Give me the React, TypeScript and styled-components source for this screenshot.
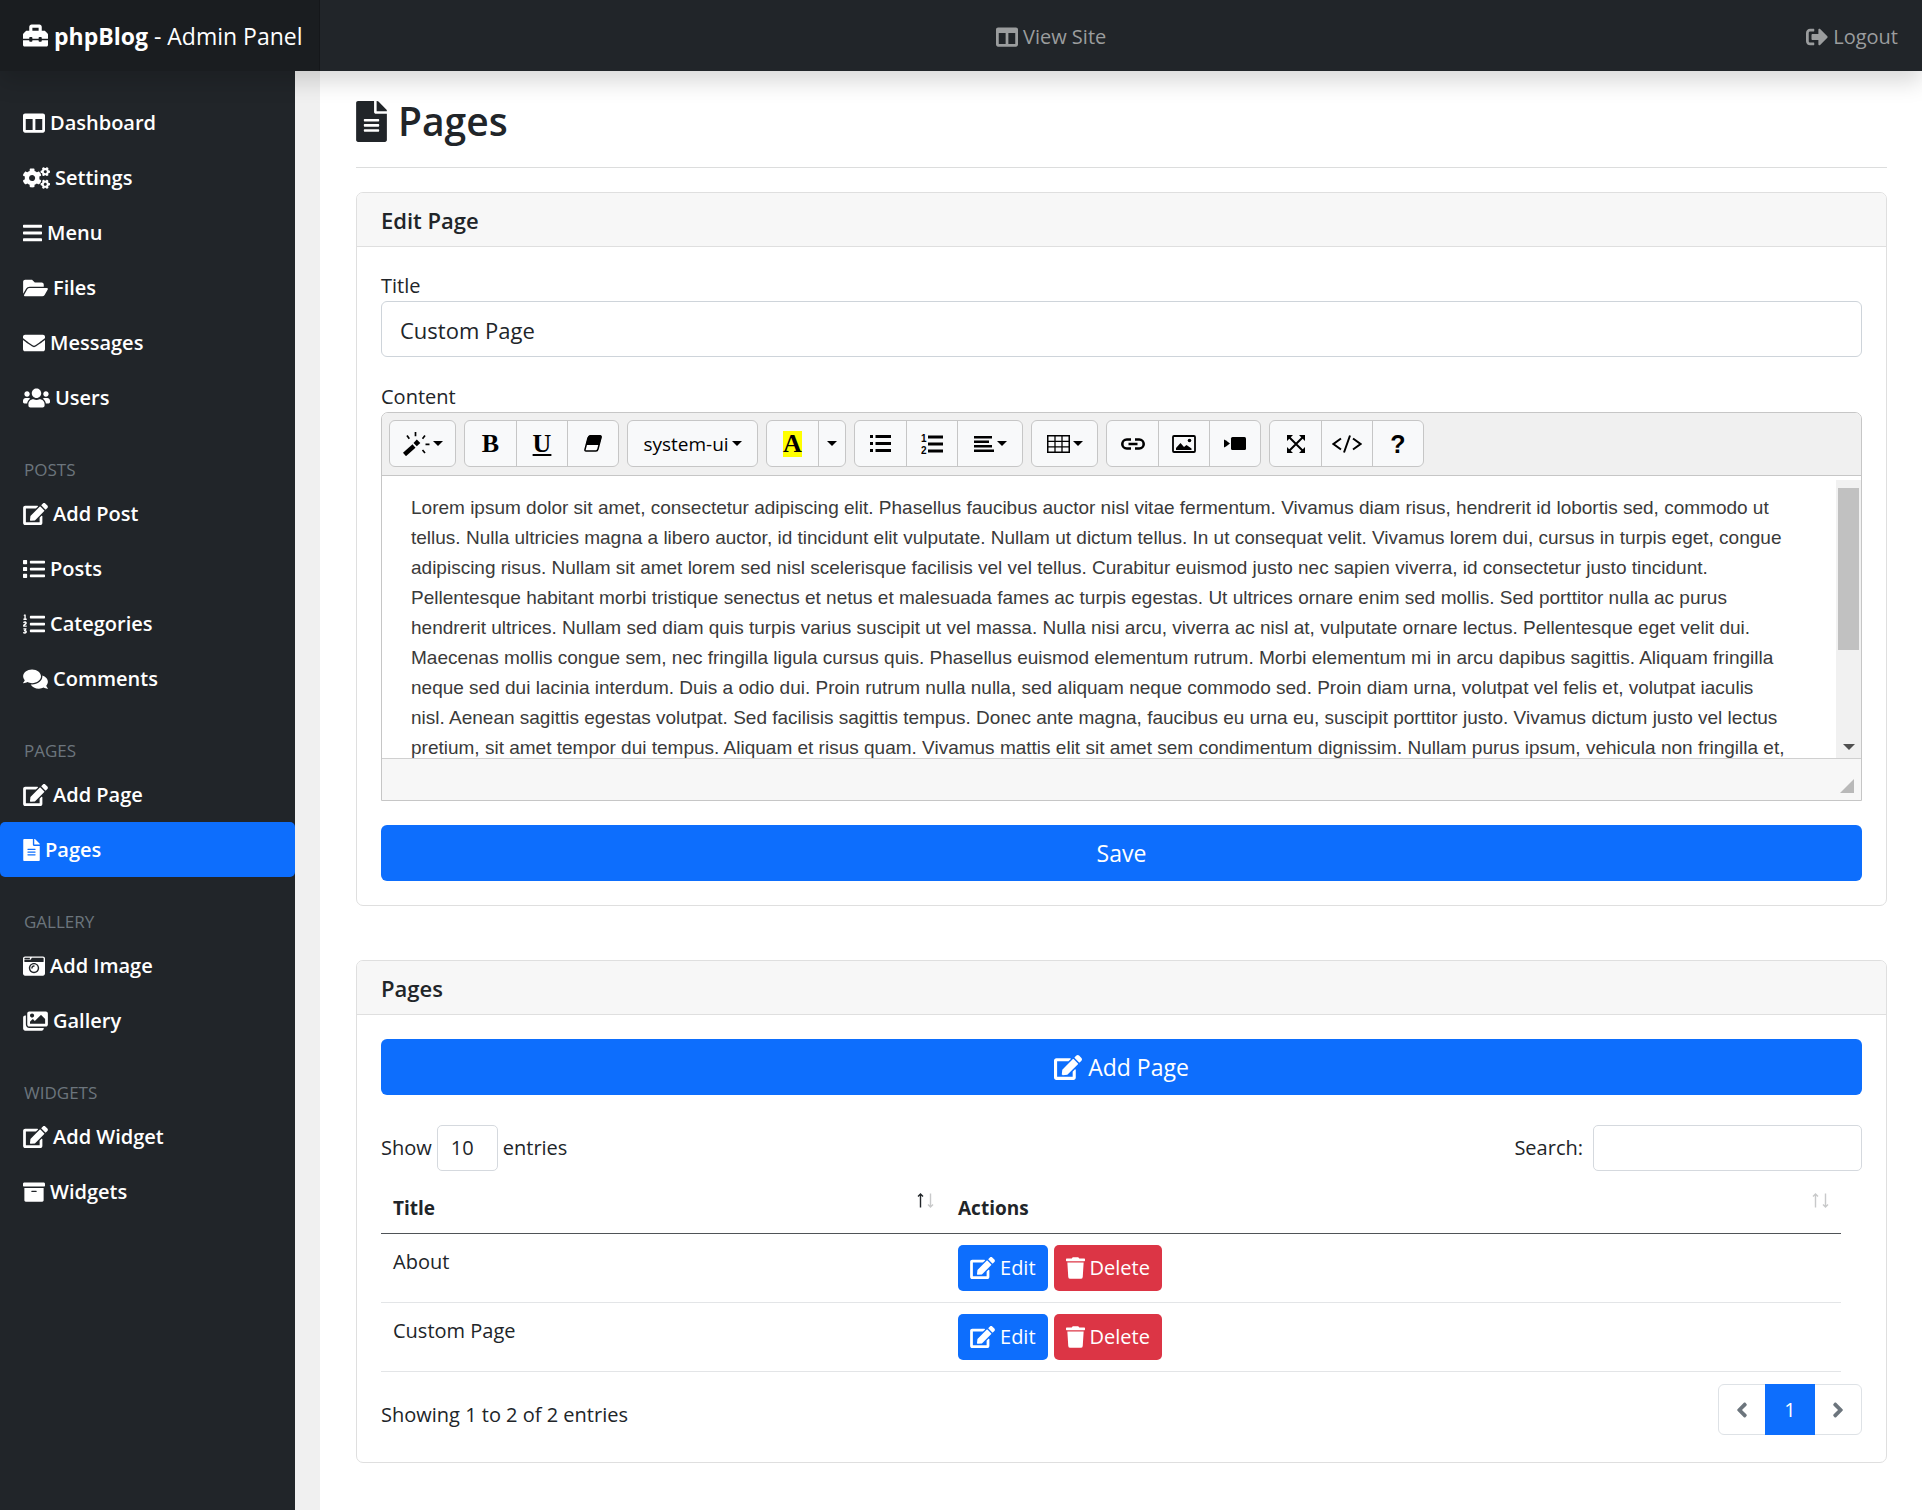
import React from "react";
import styled, { createGlobalStyle } from "styled-components";
import type { IconType } from "react-icons";
import {
  FaToolbox, FaColumns, FaCogs, FaBars, FaFolderOpen, FaEnvelope, FaUsers, FaEdit, FaList,
  FaListOl, FaComments, FaFileAlt, FaCameraRetro, FaImages, FaArchive, FaSignOutAlt, FaTrash,
  FaAngleLeft, FaAngleRight,
} from "react-icons/fa";

const sans = `"Open Sans", "Noto Sans", sans-serif`;
const blue = "#0d6efd";
const red = "#dc3545";
const ink = "#212529";
const cardLine = "#dfdfdf";
const toolLine = "#c6c6c6";

const GlobalStyle = createGlobalStyle`
  *, *::before, *::after { box-sizing: border-box; }
  body { margin: 0; background: #fff; color: ${ink}; font: 400 20px/30px ${sans}; }
  button, input, select, textarea { font: inherit; color: inherit; margin: 0; }
  a { text-decoration: none; color: inherit; }
`;

const Page = styled.div`
  min-height: 100vh;
  display: flex;
  flex-direction: column;
`;

const Glyph = styled.span<{ $w: number; $h?: number }>`
  display: flex;
  flex: none;
  svg {
    width: ${(p) => p.$w}px;
    height: ${(p) => p.$h ?? 22}px;
  }
`;

const Navbar = styled.header`
  position: relative;
  z-index: 2;
  display: flex;
  align-items: center;
  justify-content: space-between;
  height: 71px;
  background: ${ink};
  box-shadow: 0 11px 21px rgba(0, 0, 0, 0.15);
`;

const Brand = styled.a`
  display: flex;
  align-items: center;
  gap: 6px;
  width: 320px;
  height: 100%;
  padding: 0 0 0 23px;
  background: #1a1d20;
  border-right: 1px solid #15171a;
  color: #fff;
  font-size: 23px;
  white-space: nowrap;
  strong { font-weight: 700; }
`;

const NavLink = styled.a`
  display: flex;
  align-items: center;
  gap: 5px;
  padding: 2px 24px 0;
  color: #9b9d9e;
`;

const Columns = styled.div`
  flex: 1;
  display: flex;
`;

const Sidebar = styled.nav`
  flex: 0 0 320px;
  padding: 24px 0;
  background: ${ink};
  border-right: 25px solid #f0f0f0;
`;

const SideHeading = styled.h2`
  margin: 0;
  padding: 34px 24px 5px;
  color: #6c757d;
  font-size: 17px;
  line-height: 22px;
  font-weight: 400;
  text-transform: uppercase;
`;

const SideLink = styled.a<{ $active?: boolean }>`
  display: flex;
  align-items: center;
  gap: 5px;
  height: 55px;
  padding: 0 23px;
  border-radius: 5px;
  background: ${(p) => (p.$active ? blue : "transparent")};
  color: #fff;
  font-weight: 600;
`;

const Main = styled.main`
  flex: 1;
  min-width: 0;
  padding: 23px 35px 48px 36px;
`;

const Title = styled.h1`
  display: flex;
  align-items: center;
  gap: 11px;
  margin: 0 0 19px;
  font-size: 39px;
  line-height: 54px;
  font-weight: 600;
`;

const Rule = styled.hr`
  margin: 0 0 24px;
  border: 0;
  border-top: 1px solid #dcdddd;
`;

const Card = styled.section`
  border: 1px solid ${cardLine};
  border-radius: 7px;
  background: #fff;
  & + & { margin-top: 54px; }
`;

const CardHeader = styled.h2`
  margin: 0;
  padding: 12px 24px 11px;
  border-bottom: 1px solid ${cardLine};
  border-radius: 6px 6px 0 0;
  background: #f7f7f7;
  font-size: 22px;
  line-height: 30px;
  font-weight: 600;
`;

const CardBody = styled.div`
  padding: 24px;
`;

const FieldLabel = styled.label`
  display: block;
`;

const TextInput = styled.input`
  display: block;
  width: 100%;
  height: 56px;
  margin-bottom: 25px;
  padding: 2px 18px 0;
  border: 1px solid #ced4da;
  border-radius: 6px;
  background: #fff;
  font-size: 22px;
`;

const Editor = styled.div`
  margin-bottom: 24px;
  border: 1px solid ${toolLine};
  border-radius: 7px 7px 0 0;
  overflow: hidden;
`;

const Toolbar = styled.div`
  display: flex;
  flex-wrap: wrap;
  align-items: center;
  gap: 8px;
  padding: 7px 7px 8px;
  background: #f0f0f0;
  border-bottom: 1px solid ${toolLine};
`;

const ToolGroup = styled.div`
  display: flex;
  border: 1px solid ${toolLine};
  border-radius: 6px;
  overflow: hidden;
  background: #f8f9fa;
`;

const ToolButton = styled.button<{ $w?: number }>`
  display: flex;
  align-items: center;
  justify-content: center;
  gap: 3px;
  width: ${(p) => p.$w ?? 51}px;
  height: 45px;
  padding: 0;
  border: 0;
  background: transparent;
  color: #000;
  font-size: 19px;
  & + & { border-left: 1px solid ${toolLine}; }
`;

const Letter = styled.span<{ $underline?: boolean }>`
  font: 700 26px/26px "Liberation Serif", serif;
  text-decoration: ${(p) => (p.$underline ? "underline" : "none")};
`;

const Highlight = styled(Letter)`
  background: #ff0;
`;

const HelpMark = styled.span`
  font: 700 25px/26px "Liberation Sans", sans-serif;
`;

const Caret = styled.span`
  border: 5px solid transparent;
  border-top-color: #000;
  border-bottom: 0;
`;

const EditArea = styled.div`
  display: flex;
  height: 282px;
`;

const Content = styled.textarea`
  flex: 1;
  min-width: 0;
  height: 100%;
  padding: 17px 8px 0 29px;
  border: 0;
  outline: 0;
  resize: none;
  overflow: hidden;
  white-space: pre;
  background: #fff;
  color: #3a3a3a;
  font: 400 19px/30px "Liberation Sans", Arial, sans-serif;
`;

const ScrollTrack = styled.div`
  display: flex;
  flex-direction: column;
  justify-content: space-between;
  align-items: center;
  width: 25px;
  margin-top: 4px;
  padding: 8px 0;
  background: #f1f1f1;
`;

const ScrollThumb = styled.div`
  width: 21px;
  height: 162px;
  background: #c1c1c1;
`;

const ScrollArrow = styled.span`
  border: 6px solid transparent;
  border-top-color: #505050;
  border-bottom: 0;
`;

const StatusBar = styled.div`
  display: flex;
  justify-content: flex-end;
  align-items: flex-end;
  height: 42px;
  padding: 7px;
  background: #f7f7f7;
  border-top: 1px solid #d0d0d0;
`;

const BlockButton = styled.button`
  display: flex;
  align-items: center;
  justify-content: center;
  gap: 6px;
  width: 100%;
  height: 56px;
  border: 0;
  border-radius: 6px;
  background: ${blue};
  color: #fff;
  font-size: 23px;
`;

const TableTools = styled.div`
  display: flex;
  justify-content: space-between;
  margin: 30px 0 10px;
`;

const InlineLabel = styled.label<{ $gap: number }>`
  display: flex;
  align-items: center;
  gap: ${(p) => p.$gap}px;
`;

const LengthSelect = styled.select`
  appearance: none;
  width: 61px;
  height: 46px;
  padding: 0 13px;
  border: 1px solid #d5d9de;
  border-radius: 5px;
  background: #fff;
`;

const SearchInput = styled.input`
  width: 269px;
  height: 46px;
  padding: 0 11px;
  border: 1px solid #d5d9de;
  border-radius: 5px;
  background: #fff;
`;

const Table = styled.table`
  width: calc(100% - 21px);
  border-collapse: separate;
  border-spacing: 0;
  table-layout: fixed;
`;

const HeadCell = styled.th<{ $w?: string }>`
  width: ${(p) => p.$w ?? "auto"};
  padding: 12px 12px 10px;
  border-bottom: 1px solid #4f5357;
  text-align: left;
  font-size: 19px;
  font-weight: 700;
`;

const HeadInner = styled.div`
  display: flex;
  justify-content: space-between;
  align-items: flex-start;
`;

const Cell = styled.td`
  padding: 11px 12px;
  border-bottom: 1px solid #e3e5e7;
  vertical-align: top;
  line-height: 34px;
`;

const Actions = styled.div`
  display: flex;
  gap: 6px;
`;

const SmallButton = styled.button<{ $color: string }>`
  display: flex;
  align-items: center;
  gap: 5px;
  height: 46px;
  padding: 0 12px;
  border: 0;
  border-radius: 5px;
  background: ${(p) => p.$color};
  color: #fff;
`;

const TableFooter = styled.div`
  display: flex;
  justify-content: space-between;
  align-items: flex-start;
  min-height: 54px;
  margin-top: 12px;
`;

const Info = styled.p`
  margin: 16px 0 0;
`;

const Pagination = styled.div`
  display: flex;
  height: 51px;
  border: 1px solid #dee2e6;
  border-radius: 6px;
`;

const PageButton = styled.button<{ $active?: boolean }>`
  display: flex;
  align-items: center;
  justify-content: center;
  width: ${(p) => (p.$active ? 50 : 46)}px;
  margin: ${(p) => (p.$active ? "-1px 0" : "0")};
  padding: 0;
  border: 0;
  background: ${(p) => (p.$active ? blue : "transparent")};
  color: ${(p) => (p.$active ? "#fff" : "#6c757d")};
`;

const WandIcon = () => (
  <svg width="27" height="24" viewBox="0 0 27 24" stroke="#000" fill="none">
    <path d="M1.5 22.500 11 14" strokeWidth="4.500" />
    <path d="M13.800 7.500 17.300 11 13.800 14.200 10.500 11Z" fill="#000" stroke="none" />
    <path d="M4 3.500 6.300 6.800M12.500 0V4.300M22 3.500 19.500 6.800M22.500 12.300H26.500M19.500 18 22 21" strokeWidth="1.700" />
  </svg>
);

const EraserIcon = () => (
  <svg width="18" height="17" viewBox="0 0 18 17">
    <path d="M6.500 1H16Q17.300 1 17 2.500L14 14Q13.500 16 12 16H2Q.6 16 1 14.500L4 3Q4.600 1 6.500 1Z" fill="#fff" stroke="#000" strokeWidth="1.500" />
    <path d="M6 0H16Q18 0 17.500 2L15.300 10H1.800L3.800 2.500Q4.500 0 6 0Z" />
  </svg>
);

const ListIcon = () => (
  <svg width="21" height="17" viewBox="0 0 21 17">
    <path d="M0 0H3V3H0ZM5.500 0H21V3H5.500ZM0 7H3V10H0ZM5.500 7H21V10H5.500ZM0 14H3V17H0ZM5.500 14H21V17H5.500Z" />
  </svg>
);

const OrderedIcon = () => (
  <svg width="22" height="20" viewBox="0 0 22 20">
    <path d="M7 1.500H22V4.500H7ZM7 8.500H22V11.500H7ZM7 15.500H22V18.500H7Z" />
    <text x="0" y="8" fontSize="10" fontWeight="700" fontFamily="Liberation Sans">1</text>
    <text x="0" y="19.500" fontSize="10" fontWeight="700" fontFamily="Liberation Sans">2</text>
  </svg>
);

const AlignIcon = () => (
  <svg width="20" height="16" viewBox="0 0 20 16">
    <path d="M0 0H18V2.500H0ZM0 4.500H15V7H0ZM0 9H18V11.500H0ZM0 13.500H20V16H0Z" />
  </svg>
);

const GridIcon = () => (
  <svg width="23" height="18" viewBox="0 0 23 18" stroke="#000" fill="none" strokeWidth="1.500">
    <rect x=".75" y=".75" width="21.500" height="16.500" />
    <path d="M8 1V17M15 1V17M1 6.300H22M1 11.800H22" strokeWidth="1.300" />
  </svg>
);

const LinkIcon = () => (
  <svg width="24" height="12" viewBox="0 0 24 12" stroke="#000" fill="none" strokeWidth="2.600">
    <path d="M10 1.500H5.800A4.500 4.500 0 0 0 5.800 10.500H10M14 1.500H18.200A4.500 4.500 0 0 1 18.200 10.500H14M7.500 6H16.500" />
  </svg>
);

const PictureIcon = () => (
  <svg width="24" height="18" viewBox="0 0 24 18">
    <rect x="1" y="1" width="22" height="16" rx="1" fill="none" stroke="#000" strokeWidth="1.800" />
    <path d="M4 15V13L8.500 8 12 12 14.500 10 19.500 13.500V15Z" />
    <circle cx="17.500" cy="5.500" r="1.800" />
  </svg>
);

const VideoIcon = () => (
  <svg width="22" height="13" viewBox="0 0 22 13">
    <rect x="7" width="15" height="13" rx="1.500" />
    <path d="M0 2.500 2 3.500 6 6.500 2 9.500 0 10.500Z" />
  </svg>
);

const ExpandIcon = () => (
  <svg width="18" height="18" viewBox="0 0 18 18">
    <path d="M2.500 2.500 15.500 15.500M15.500 2.500 2.500 15.500" stroke="#000" strokeWidth="2" />
    <path d="M0 0H6L0 6ZM18 0V6L12 0ZM0 18V12L6 18ZM18 18H12L18 12Z" />
  </svg>
);

const CodeIcon = () => (
  <svg width="30" height="18" viewBox="0 0 30 18" stroke="#000" fill="none" strokeWidth="2">
    <path d="M9 3.500 1.500 9 9 14.500M21 3.500 28.500 9 21 14.500M18 .5 12 17.500" />
  </svg>
);

const ResizeGrip = () => (
  <svg width="14" height="14" viewBox="0 0 14 14" aria-hidden="true">
    <path d="M14 0V14H0Z" fill="#b9b9b9" />
  </svg>
);

const SortIcon = ({ up }: { up?: boolean }) => (
  <svg width="17" height="15" viewBox="0 0 17 15" fill="none" strokeWidth="1.400">
    <path d="M3.500 14.500V1M1 3.500 3.500 1 6 3.500" stroke={up ? "#212529" : "#c8c9ca"} />
    <path d="M13.500 .5V14M11 11.500 13.500 14 16 11.500" stroke="#c8c9ca" />
  </svg>
);

type Item = { icon: IconType; w: number; label: string; active?: boolean };

const menu: { heading?: string; items: Item[] }[] = [
  {
    items: [
      { icon: FaColumns, w: 22, label: "Dashboard" },
      { icon: FaCogs, w: 27, label: "Settings" },
      { icon: FaBars, w: 19, label: "Menu" },
      { icon: FaFolderOpen, w: 25, label: "Files" },
      { icon: FaEnvelope, w: 22, label: "Messages" },
      { icon: FaUsers, w: 27, label: "Users" },
    ],
  },
  {
    heading: "Posts",
    items: [
      { icon: FaEdit, w: 25, label: "Add Post" },
      { icon: FaList, w: 22, label: "Posts" },
      { icon: FaListOl, w: 22, label: "Categories" },
      { icon: FaComments, w: 25, label: "Comments" },
    ],
  },
  {
    heading: "Pages",
    items: [
      { icon: FaEdit, w: 25, label: "Add Page" },
      { icon: FaFileAlt, w: 17, label: "Pages", active: true },
    ],
  },
  {
    heading: "Gallery",
    items: [
      { icon: FaCameraRetro, w: 22, label: "Add Image" },
      { icon: FaImages, w: 25, label: "Gallery" },
    ],
  },
  {
    heading: "Widgets",
    items: [
      { icon: FaEdit, w: 25, label: "Add Widget" },
      { icon: FaArchive, w: 22, label: "Widgets" },
    ],
  },
];

const pageText = [
  "Lorem ipsum dolor sit amet, consectetur adipiscing elit. Phasellus faucibus auctor nisl vitae fermentum. Vivamus diam risus, hendrerit id lobortis sed, commodo ut",
  "tellus. Nulla ultricies magna a libero auctor, id tincidunt elit vulputate. Nullam ut dictum tellus. In ut consequat velit. Vivamus lorem dui, cursus in turpis eget, congue",
  "adipiscing risus. Nullam sit amet lorem sed nisl scelerisque facilisis vel vel tellus. Curabitur euismod justo nec sapien viverra, id consectetur justo tincidunt.",
  "Pellentesque habitant morbi tristique senectus et netus et malesuada fames ac turpis egestas. Ut ultrices ornare enim sed mollis. Sed porttitor nulla ac purus",
  "hendrerit ultrices. Nullam sed diam quis turpis varius suscipit ut vel massa. Nulla nisi arcu, viverra ac nisl at, vulputate ornare lectus. Pellentesque eget velit dui.",
  "Maecenas mollis congue sem, nec fringilla ligula cursus quis. Phasellus euismod elementum rutrum. Morbi elementum mi in arcu dapibus sagittis. Aliquam fringilla",
  "neque sed dui lacinia interdum. Duis a odio dui. Proin rutrum nulla nulla, sed aliquam neque commodo sed. Proin diam urna, volutpat vel felis et, volutpat iaculis",
  "nisl. Aenean sagittis egestas volutpat. Sed facilisis sagittis tempus. Donec ante magna, faucibus eu urna eu, suscipit porttitor justo. Vivamus dictum justo vel lectus",
  "pretium, sit amet tempor dui tempus. Aliquam et risus quam. Vivamus mattis elit sit amet sem condimentum dignissim. Nullam purus ipsum, vehicula non fringilla et,",
].join("\n");

const rows = ["About", "Custom Page"];

export default function App() {
  return (
    <Page>
      <GlobalStyle />
      <Navbar>
        <Brand href="#">
          <Glyph $w={25} $h={25}><FaToolbox /></Glyph>
          <span><strong>phpBlog</strong> - Admin Panel</span>
        </Brand>
        <NavLink href="#"><Glyph $w={22}><FaColumns /></Glyph>View Site</NavLink>
        <NavLink href="#"><Glyph $w={22}><FaSignOutAlt /></Glyph>Logout</NavLink>
      </Navbar>
      <Columns>
        <Sidebar>
          {menu.map((group, i) => (
            <React.Fragment key={i}>
              {group.heading && <SideHeading>{group.heading}</SideHeading>}
              {group.items.map(({ icon: Icon, w, label, active }) => (
                <SideLink key={label} href="#" $active={active}>
                  <Glyph $w={w}><Icon /></Glyph>
                  {label}
                </SideLink>
              ))}
            </React.Fragment>
          ))}
        </Sidebar>
        <Main>
          <Title><Glyph $w={31} $h={41}><FaFileAlt /></Glyph>Pages</Title>
          <Rule />
          <Card>
            <CardHeader>Edit Page</CardHeader>
            <CardBody>
              <FieldLabel htmlFor="title">Title</FieldLabel>
              <TextInput id="title" type="text" defaultValue="Custom Page" />
              <FieldLabel htmlFor="content">Content</FieldLabel>
              <Editor>
                <Toolbar>
                  <ToolGroup>
                    <ToolButton type="button" $w={65} aria-label="Style"><WandIcon /><Caret /></ToolButton>
                  </ToolGroup>
                  <ToolGroup>
                    <ToolButton type="button"><Letter>B</Letter></ToolButton>
                    <ToolButton type="button"><Letter $underline>U</Letter></ToolButton>
                    <ToolButton type="button" aria-label="Remove font style"><EraserIcon /></ToolButton>
                  </ToolGroup>
                  <ToolGroup>
                    <ToolButton type="button" $w={129}>system-ui<Caret /></ToolButton>
                  </ToolGroup>
                  <ToolGroup>
                    <ToolButton type="button"><Highlight>A</Highlight></ToolButton>
                    <ToolButton type="button" $w={27} aria-label="More colors"><Caret /></ToolButton>
                  </ToolGroup>
                  <ToolGroup>
                    <ToolButton type="button" aria-label="Unordered list"><ListIcon /></ToolButton>
                    <ToolButton type="button" aria-label="Ordered list"><OrderedIcon /></ToolButton>
                    <ToolButton type="button" $w={65} aria-label="Paragraph"><AlignIcon /><Caret /></ToolButton>
                  </ToolGroup>
                  <ToolGroup>
                    <ToolButton type="button" $w={65} aria-label="Table"><GridIcon /><Caret /></ToolButton>
                  </ToolGroup>
                  <ToolGroup>
                    <ToolButton type="button" aria-label="Link"><LinkIcon /></ToolButton>
                    <ToolButton type="button" aria-label="Picture"><PictureIcon /></ToolButton>
                    <ToolButton type="button" aria-label="Video"><VideoIcon /></ToolButton>
                  </ToolGroup>
                  <ToolGroup>
                    <ToolButton type="button" aria-label="Full screen"><ExpandIcon /></ToolButton>
                    <ToolButton type="button" aria-label="Code view"><CodeIcon /></ToolButton>
                    <ToolButton type="button"><HelpMark>?</HelpMark></ToolButton>
                  </ToolGroup>
                </Toolbar>
                <EditArea>
                  <Content id="content" defaultValue={pageText} spellCheck={false} />
                  <ScrollTrack aria-hidden="true"><ScrollThumb /><ScrollArrow /></ScrollTrack>
                </EditArea>
                <StatusBar><ResizeGrip /></StatusBar>
              </Editor>
              <BlockButton type="submit">Save</BlockButton>
            </CardBody>
          </Card>
          <Card>
            <CardHeader>Pages</CardHeader>
            <CardBody>
              <BlockButton type="button"><Glyph $w={28} $h={25}><FaEdit /></Glyph>Add Page</BlockButton>
              <TableTools>
                <InlineLabel $gap={5}>
                  Show
                  <LengthSelect defaultValue="10"><option>10</option></LengthSelect>
                  entries
                </InlineLabel>
                <InlineLabel $gap={10}>Search:<SearchInput type="search" /></InlineLabel>
              </TableTools>
              <Table>
                <thead>
                  <tr>
                    <HeadCell $w="38.7%"><HeadInner>Title<SortIcon up /></HeadInner></HeadCell>
                    <HeadCell><HeadInner>Actions<SortIcon /></HeadInner></HeadCell>
                  </tr>
                </thead>
                <tbody>
                  {rows.map((title) => (
                    <tr key={title}>
                      <Cell>{title}</Cell>
                      <Cell>
                        <Actions>
                          <SmallButton type="button" $color={blue}><Glyph $w={25}><FaEdit /></Glyph>Edit</SmallButton>
                          <SmallButton type="button" $color={red}><Glyph $w={19}><FaTrash /></Glyph>Delete</SmallButton>
                        </Actions>
                      </Cell>
                    </tr>
                  ))}
                </tbody>
              </Table>
              <TableFooter>
                <Info>Showing 1 to 2 of 2 entries</Info>
                <Pagination>
                  <PageButton type="button" aria-label="Previous"><Glyph $w={12} $h={24}><FaAngleLeft /></Glyph></PageButton>
                  <PageButton type="button" $active>1</PageButton>
                  <PageButton type="button" aria-label="Next"><Glyph $w={12} $h={24}><FaAngleRight /></Glyph></PageButton>
                </Pagination>
              </TableFooter>
            </CardBody>
          </Card>
        </Main>
      </Columns>
    </Page>
  );
}
